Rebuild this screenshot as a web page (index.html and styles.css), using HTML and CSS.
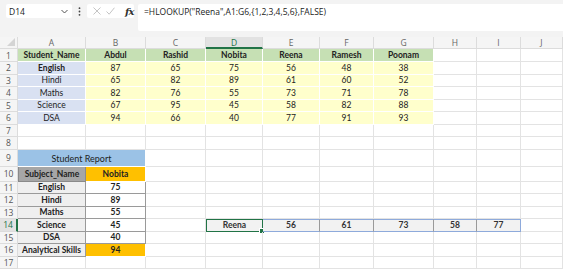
FILE: index.html
```html
<!DOCTYPE html>
<html>
<head>
<meta charset="utf-8">
<link rel="stylesheet" href="styles.css">
</head>
<body>
<div class="topbar">
  <div class="namebox"><span>D14</span>
    <svg class="chev" width="7" height="5" viewBox="0 0 7 5"><path d="M0.5 1 L3.5 4 L6.5 1" fill="none" stroke="#555" stroke-width="1"/></svg>
  </div>
  <div class="dots"><svg width="3" height="9" viewBox="0 0 3 9"><circle cx="1.5" cy="1.2" r="0.9" fill="#444"/><circle cx="1.5" cy="4.5" r="0.9" fill="#444"/><circle cx="1.5" cy="7.8" r="0.9" fill="#444"/></svg></div>
  <div class="fnbtns">
    <svg width="8" height="8" viewBox="0 0 8 8"><path d="M0.5 0.5 L7.5 7.5 M7.5 0.5 L0.5 7.5" stroke="#bdbdbd" stroke-width="0.9"/></svg>
    <svg width="9" height="8" viewBox="0 0 9 8"><path d="M0.5 4.5 L3.2 7.2 L8.5 0.7" fill="none" stroke="#bdbdbd" stroke-width="0.9"/></svg>
    <span class="fx">fx</span>
  </div>
  <div class="formula">=HLOOKUP("Reena",A1:G6,{1,2,3,4,5,6},FALSE)</div>
</div>
<div class="sheet">
  <div class="corner"><svg width="8" height="8" viewBox="0 0 8 8"><path d="M8 0 L8 8 L0 8 Z" fill="#d4d4d4"/></svg></div>
  <div class="ch">A</div><div class="ch">B</div><div class="ch">C</div><div class="ch chsel">D</div><div class="ch">E</div><div class="ch">F</div><div class="ch">G</div><div class="ch">H</div><div class="ch">I</div><div class="ch">J</div>

  <div class="rh">1</div><div class="c g">Student_Name</div><div class="c g">Abdul</div><div class="c g">Rashid</div><div class="c g">Nobita</div><div class="c g">Reena</div><div class="c g">Ramesh</div><div class="c g">Poonam</div><div class="c"></div><div class="c"></div><div class="c"></div>

  <div class="rh">2</div><div class="c lv bold">English</div><div class="c y">87</div><div class="c y">65</div><div class="c y">75</div><div class="c y">56</div><div class="c y">48</div><div class="c y">38</div><div class="c"></div><div class="c"></div><div class="c"></div>

  <div class="rh">3</div><div class="c lv">Hindi</div><div class="c y">65</div><div class="c y">82</div><div class="c y">89</div><div class="c y">61</div><div class="c y">60</div><div class="c y">52</div><div class="c"></div><div class="c"></div><div class="c"></div>

  <div class="rh">4</div><div class="c lv">Maths</div><div class="c y">82</div><div class="c y">76</div><div class="c y">55</div><div class="c y">73</div><div class="c y">71</div><div class="c y">78</div><div class="c"></div><div class="c"></div><div class="c"></div>

  <div class="rh">5</div><div class="c lv">Science</div><div class="c y">67</div><div class="c y">95</div><div class="c y">45</div><div class="c y">58</div><div class="c y">82</div><div class="c y">88</div><div class="c"></div><div class="c"></div><div class="c"></div>

  <div class="rh">6</div><div class="c lv">DSA</div><div class="c y">94</div><div class="c y">66</div><div class="c y">40</div><div class="c y">77</div><div class="c y">91</div><div class="c y">93</div><div class="c"></div><div class="c"></div><div class="c"></div>

  <div class="rh">7</div><div class="c"></div><div class="c"></div><div class="c"></div><div class="c"></div><div class="c"></div><div class="c"></div><div class="c"></div><div class="c"></div><div class="c"></div><div class="c"></div>

  <div class="rh">8</div><div class="c"></div><div class="c"></div><div class="c"></div><div class="c"></div><div class="c"></div><div class="c"></div><div class="c"></div><div class="c"></div><div class="c"></div><div class="c"></div>

  <div class="rh">9</div><div class="c rt">Student Report</div><div class="c"></div><div class="c"></div><div class="c"></div><div class="c"></div><div class="c"></div><div class="c"></div><div class="c"></div><div class="c"></div>

  <div class="rh">10</div><div class="c rs bold">Subject_Name</div><div class="c ro bold">Nobita</div><div class="c"></div><div class="c"></div><div class="c"></div><div class="c"></div><div class="c"></div><div class="c"></div><div class="c"></div><div class="c"></div>

  <div class="rh">11</div><div class="c rl bold">English</div><div class="c rw bold">75</div><div class="c"></div><div class="c"></div><div class="c"></div><div class="c"></div><div class="c"></div><div class="c"></div><div class="c"></div><div class="c"></div>

  <div class="rh">12</div><div class="c rl bold">Hindi</div><div class="c rw bold">89</div><div class="c"></div><div class="c"></div><div class="c"></div><div class="c"></div><div class="c"></div><div class="c"></div><div class="c"></div><div class="c"></div>

  <div class="rh">13</div><div class="c rl bold">Maths</div><div class="c rw bold">55</div><div class="c"></div><div class="c"></div><div class="c"></div><div class="c"></div><div class="c"></div><div class="c"></div><div class="c"></div><div class="c"></div>

  <div class="rh rhsel">14</div><div class="c rl bold">Science</div><div class="c rw bold">45</div><div class="c"></div><div class="c sel bold">Reena</div><div class="c rg bold">56</div><div class="c rg bold">61</div><div class="c rg bold">73</div><div class="c rg bold">58</div><div class="c rg rgend bold">77</div><div class="c"></div>

  <div class="rh">15</div><div class="c rl bold">DSA</div><div class="c rw bold">40</div><div class="c"></div><div class="c"></div><div class="c"></div><div class="c"></div><div class="c"></div><div class="c"></div><div class="c"></div><div class="c"></div>

  <div class="rh">16</div><div class="c rl bold">Analytical Skills</div><div class="c ro bold">94</div><div class="c"></div><div class="c"></div><div class="c"></div><div class="c"></div><div class="c"></div><div class="c"></div><div class="c"></div><div class="c"></div>

  <div class="rh">17</div><div class="c"></div><div class="c"></div><div class="c"></div><div class="c"></div><div class="c"></div><div class="c"></div><div class="c"></div><div class="c"></div><div class="c"></div><div class="c"></div>
</div>
</body>
</html>
```

FILE: styles.css
```css
* { box-sizing: border-box; }
html, body { margin: 0; padding: 0; }
body {
  width: 563px;
  height: 270px;
  overflow: hidden;
  background: #ffffff;
  font-family: "Open Sans", "Noto Sans", sans-serif;
  color: #222;
}
.topbar {
  height: 37px;
  background: #f3f3f3;
  display: flex;
  align-items: flex-start;
  padding: 4px 0 0 6px;
}
.namebox {
  width: 66px;
  height: 14px;
  background: #fff;
  border-radius: 2px;
  display: flex;
  align-items: center;
  justify-content: space-between;
  padding: 0 4px 0 3px;
  font-size: 8.5px;
  color: #222;
}
.chev { margin-top: 1px; }
.dots {
  width: 15px;
  height: 14px;
  display: flex;
  align-items: center;
  justify-content: center;
}
.fnbtns {
  width: 47px;
  height: 14px;
  background: #fff;
  border-radius: 2px;
  display: flex;
  align-items: center;
  gap: 5px;
  padding-left: 6px;
}
.fx {
  font-family: "DejaVu Serif", "Liberation Serif", serif;
  font-style: italic;
  font-weight: 700;
  font-size: 10px;
  color: #333;
  margin-left: 5px;
  letter-spacing: -0.6px;
}
.formula {
  flex: 1;
  margin-left: 4px;
  height: 27px;
  background: #fff;
  border-radius: 2px 0 0 2px;
  padding: 1px 0 0 6px;
  font-size: 8.5px;
  line-height: 14px;
  color: #222;
  white-space: nowrap;
}
.sheet {
  display: grid;
  grid-template-columns: 18px 68px 60px 60px 57px 57px 54px 60px 43px 44px 1fr;
  grid-template-rows: 12px 13px repeat(7, 12.5px) 17.5px 14.5px repeat(7, 12.5px);
  font-family: Lato, "Liberation Sans", sans-serif;
  font-size: 8.5px;
}
.corner, .ch, .rh {
  background: #f5f5f5;
  color: #666;
  display: flex;
  align-items: center;
  justify-content: center;
  border-right: 1px solid #dcdcdc;
  border-bottom: 1px solid #dcdcdc;
  font-family: "Open Sans", "Noto Sans", sans-serif;
  font-size: 8.5px;
}
.corner { justify-content: flex-end; align-items: flex-end; padding: 0 2px 2px 0; }
.rh { color: #555; }
.chsel {
  background: #e2e2e2;
  color: #217346;
  border-bottom: 2px solid #217346;
}
.rhsel {
  background: #e2e2e2;
  color: #217346;
  border-right: 2px solid #217346;
}
.c {
  border-right: 1px solid #e3e3e3;
  border-bottom: 1px solid #e3e3e3;
  display: flex;
  align-items: center;
  justify-content: center;
  white-space: nowrap;
  color: #222;
  position: relative;
}
.bold { font-weight: 700; }
.g { background: #c6e0b4; border-color: #fff; font-weight: 700; }
.lv { background: #d9e1f2; border-color: #fff; }
.y { background: #ffffcc; border-color: #fff; }
.rt {
  grid-column: span 2;
  background: #9bc2e6;
  border-color: #fff;
  font-size: 9px;
  padding-top: 2px;
}
.rs { background: #a6a6a6; border: 1px solid #8a8a8a; border-top: none; }
.ro { background: #ffc000; border-right: 1px solid #fff; border-bottom: 1px solid #fff; }
.rl { background: #efefef; border-right: 1px solid #9a9a9a; border-bottom: 1px solid #9a9a9a; }
.rw { background: #fff; border-right: 1px solid #9a9a9a; border-bottom: 1px solid #9a9a9a; }
.sel {
  background: #f2f2f2;
  border: 1.5px solid #217346;
  color: #333;
}
.sel::after {
  content: "";
  position: absolute;
  right: -3px;
  bottom: -3px;
  width: 4px;
  height: 4px;
  background: #217346;
  border: 1px solid #fff;
}
.rg {
  background: #f2f2f2;
  border-top: 1px solid #8eaadb;
  border-bottom: 1px solid #8eaadb;
  border-right: 1px solid #9a9a9a;
  color: #333;
}
.rgend { border-right: 1px solid #8eaadb; }
```
